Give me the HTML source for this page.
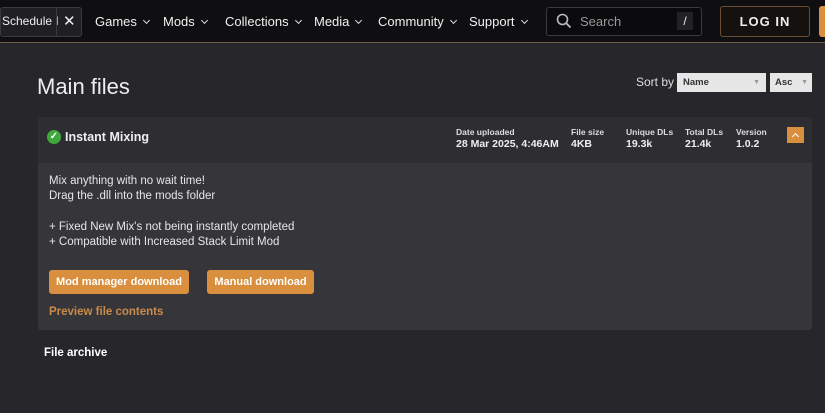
<html><head><style>
body{margin:0;width:825px;height:413px;background:#27272b;font-family:"Liberation Sans",sans-serif;overflow:hidden;position:relative;color:#eee}
.top{position:absolute;left:0;top:0;width:825px;height:42px;background:#0f0f11;border-bottom:1px solid #6b5a44}
.a{position:absolute;white-space:nowrap}
.nav{top:14px;font-size:13px;color:#f0f0f0}
.ch{display:inline-block;width:4px;height:4px;border-right:1.4px solid #ddd;border-bottom:1.4px solid #ddd;transform:rotate(45deg);margin-left:7px;position:relative;top:-3px}
.card{position:absolute;left:38px;top:117px;width:774px;height:213px;background:#36363a;border-radius:3px}
.ch2{position:absolute;left:0;top:0;width:774px;height:46px;background:#2e2e32;border-radius:3px 3px 0 0}
.lbl{font-size:8.5px;color:#ddd;top:127px;font-weight:bold}
.val{font-size:10.5px;color:#eee;top:138px;font-weight:bold}
.btn{position:absolute;top:270px;height:24px;background:#d98f3e;border-radius:3px;color:#fff;font-size:11px;font-weight:bold;line-height:24px;text-align:center}
.d{font-size:11.5px;color:#e6e6e6;left:49px}
</style></head><body>
<div class="top"></div>
<div class="a" style="left:0;top:7px;width:80px;height:28px;border:1px solid #3a3a3e;border-radius:3px;background:#202024"></div>
<div class="a" style="left:2px;top:14px;font-size:12px">Schedule I</div>
<div class="a" style="left:56px;top:7px;width:1px;height:29px;background:#3a3a3e"></div>
<div class="a" style="left:63px;top:12px;font-size:15px">✕</div>
<div class="a nav" style="left:95px">Games<span class="ch"></span></div>
<div class="a nav" style="left:163px">Mods<span class="ch"></span></div>
<div class="a nav" style="left:225px">Collections<span class="ch"></span></div>
<div class="a nav" style="left:314px">Media<span class="ch"></span></div>
<div class="a nav" style="left:378px">Community<span class="ch"></span></div>
<div class="a nav" style="left:469px">Support<span class="ch"></span></div>
<div class="a" style="left:546px;top:7px;width:154px;height:27px;border:1px solid #3a3a3e;border-radius:3px;background:#0b0b0d"></div>
<svg class="a" style="left:556px;top:13px" width="16" height="16"><circle cx="6.5" cy="6.5" r="5" stroke="#bbb" stroke-width="1.6" fill="none"/><line x1="10" y1="10" x2="14.5" y2="14.5" stroke="#bbb" stroke-width="1.8"/></svg>
<div class="a" style="left:580px;top:14px;font-size:13px;color:#999">Search</div>
<div class="a" style="left:677px;top:12px;width:16px;height:18px;background:#222226;font-size:12px;text-align:center;line-height:18px">/</div>
<div class="a" style="left:720px;top:6px;width:88px;height:29px;border:1px solid #6b4e30;border-radius:3px;background:#14110f;font-size:13px;font-weight:bold;text-align:center;line-height:29px;letter-spacing:1px">LOG IN</div>
<div class="a" style="left:819px;top:6px;width:10px;height:31px;background:#d98f3e;border-radius:3px"></div>
<div class="a" style="left:37px;top:74px;font-size:22px;color:#eee">Main files</div>
<div class="a" style="left:636px;top:75px;font-size:12px;color:#ddd">Sort by</div>
<div class="a" style="left:677px;top:73px;width:89px;height:19px;background:#e6e6e6;color:#333;font-size:9.5px;font-weight:bold;line-height:19px;text-indent:6px">Name<span style="position:absolute;right:6px;color:#999;font-size:7px">▼</span></div>
<div class="a" style="left:770px;top:73px;width:42px;height:19px;background:#e6e6e6;color:#333;font-size:9.5px;font-weight:bold;line-height:19px;text-indent:5px">Asc<span style="position:absolute;right:4px;color:#999;font-size:7px">▼</span></div>
<div class="card"><div class="ch2"></div></div>
<div class="a" style="left:47px;top:130px;width:14px;height:14px;border-radius:50%;background:#3fa83b;color:#fff;font-size:10px;text-align:center;line-height:14px;font-weight:bold">✓</div>
<div class="a" style="left:65px;top:130px;font-size:12.5px;font-weight:bold">Instant Mixing</div>
<div class="a lbl" style="left:456px">Date uploaded</div><div class="a val" style="left:456px">28 Mar 2025, 4:46AM</div>
<div class="a lbl" style="left:571px">File size</div><div class="a val" style="left:571px">4KB</div>
<div class="a lbl" style="left:626px">Unique DLs</div><div class="a val" style="left:626px">19.3k</div>
<div class="a lbl" style="left:685px">Total DLs</div><div class="a val" style="left:685px">21.4k</div>
<div class="a lbl" style="left:736px">Version</div><div class="a val" style="left:736px">1.0.2</div>
<div class="a" style="left:787px;top:127px;width:17px;height:16px;background:#d98f3e"><div style="position:absolute;left:6px;top:7px;width:4px;height:4px;border-left:1.6px solid #fff;border-top:1.6px solid #fff;transform:rotate(45deg)"></div></div>
<div class="a d" style="top:175px">Mix anything with no wait time!</div>
<div class="a d" style="top:190px">Drag the .dll into the mods folder</div>
<div class="a d" style="top:221px">+ Fixed New Mix's not being instantly completed</div>
<div class="a d" style="top:236px">+ Compatible with Increased Stack Limit Mod</div>
<div class="btn" style="left:49px;width:140px">Mod manager download</div>
<div class="btn" style="left:207px;width:107px">Manual download</div>
<div class="a" style="left:49px;top:306px;font-size:11.5px;font-weight:bold;color:#c98a4a">Preview file contents</div>
<div class="a" style="left:44px;top:347px;font-size:11.5px;font-weight:bold;color:#fff">File archive</div>
</body></html>
